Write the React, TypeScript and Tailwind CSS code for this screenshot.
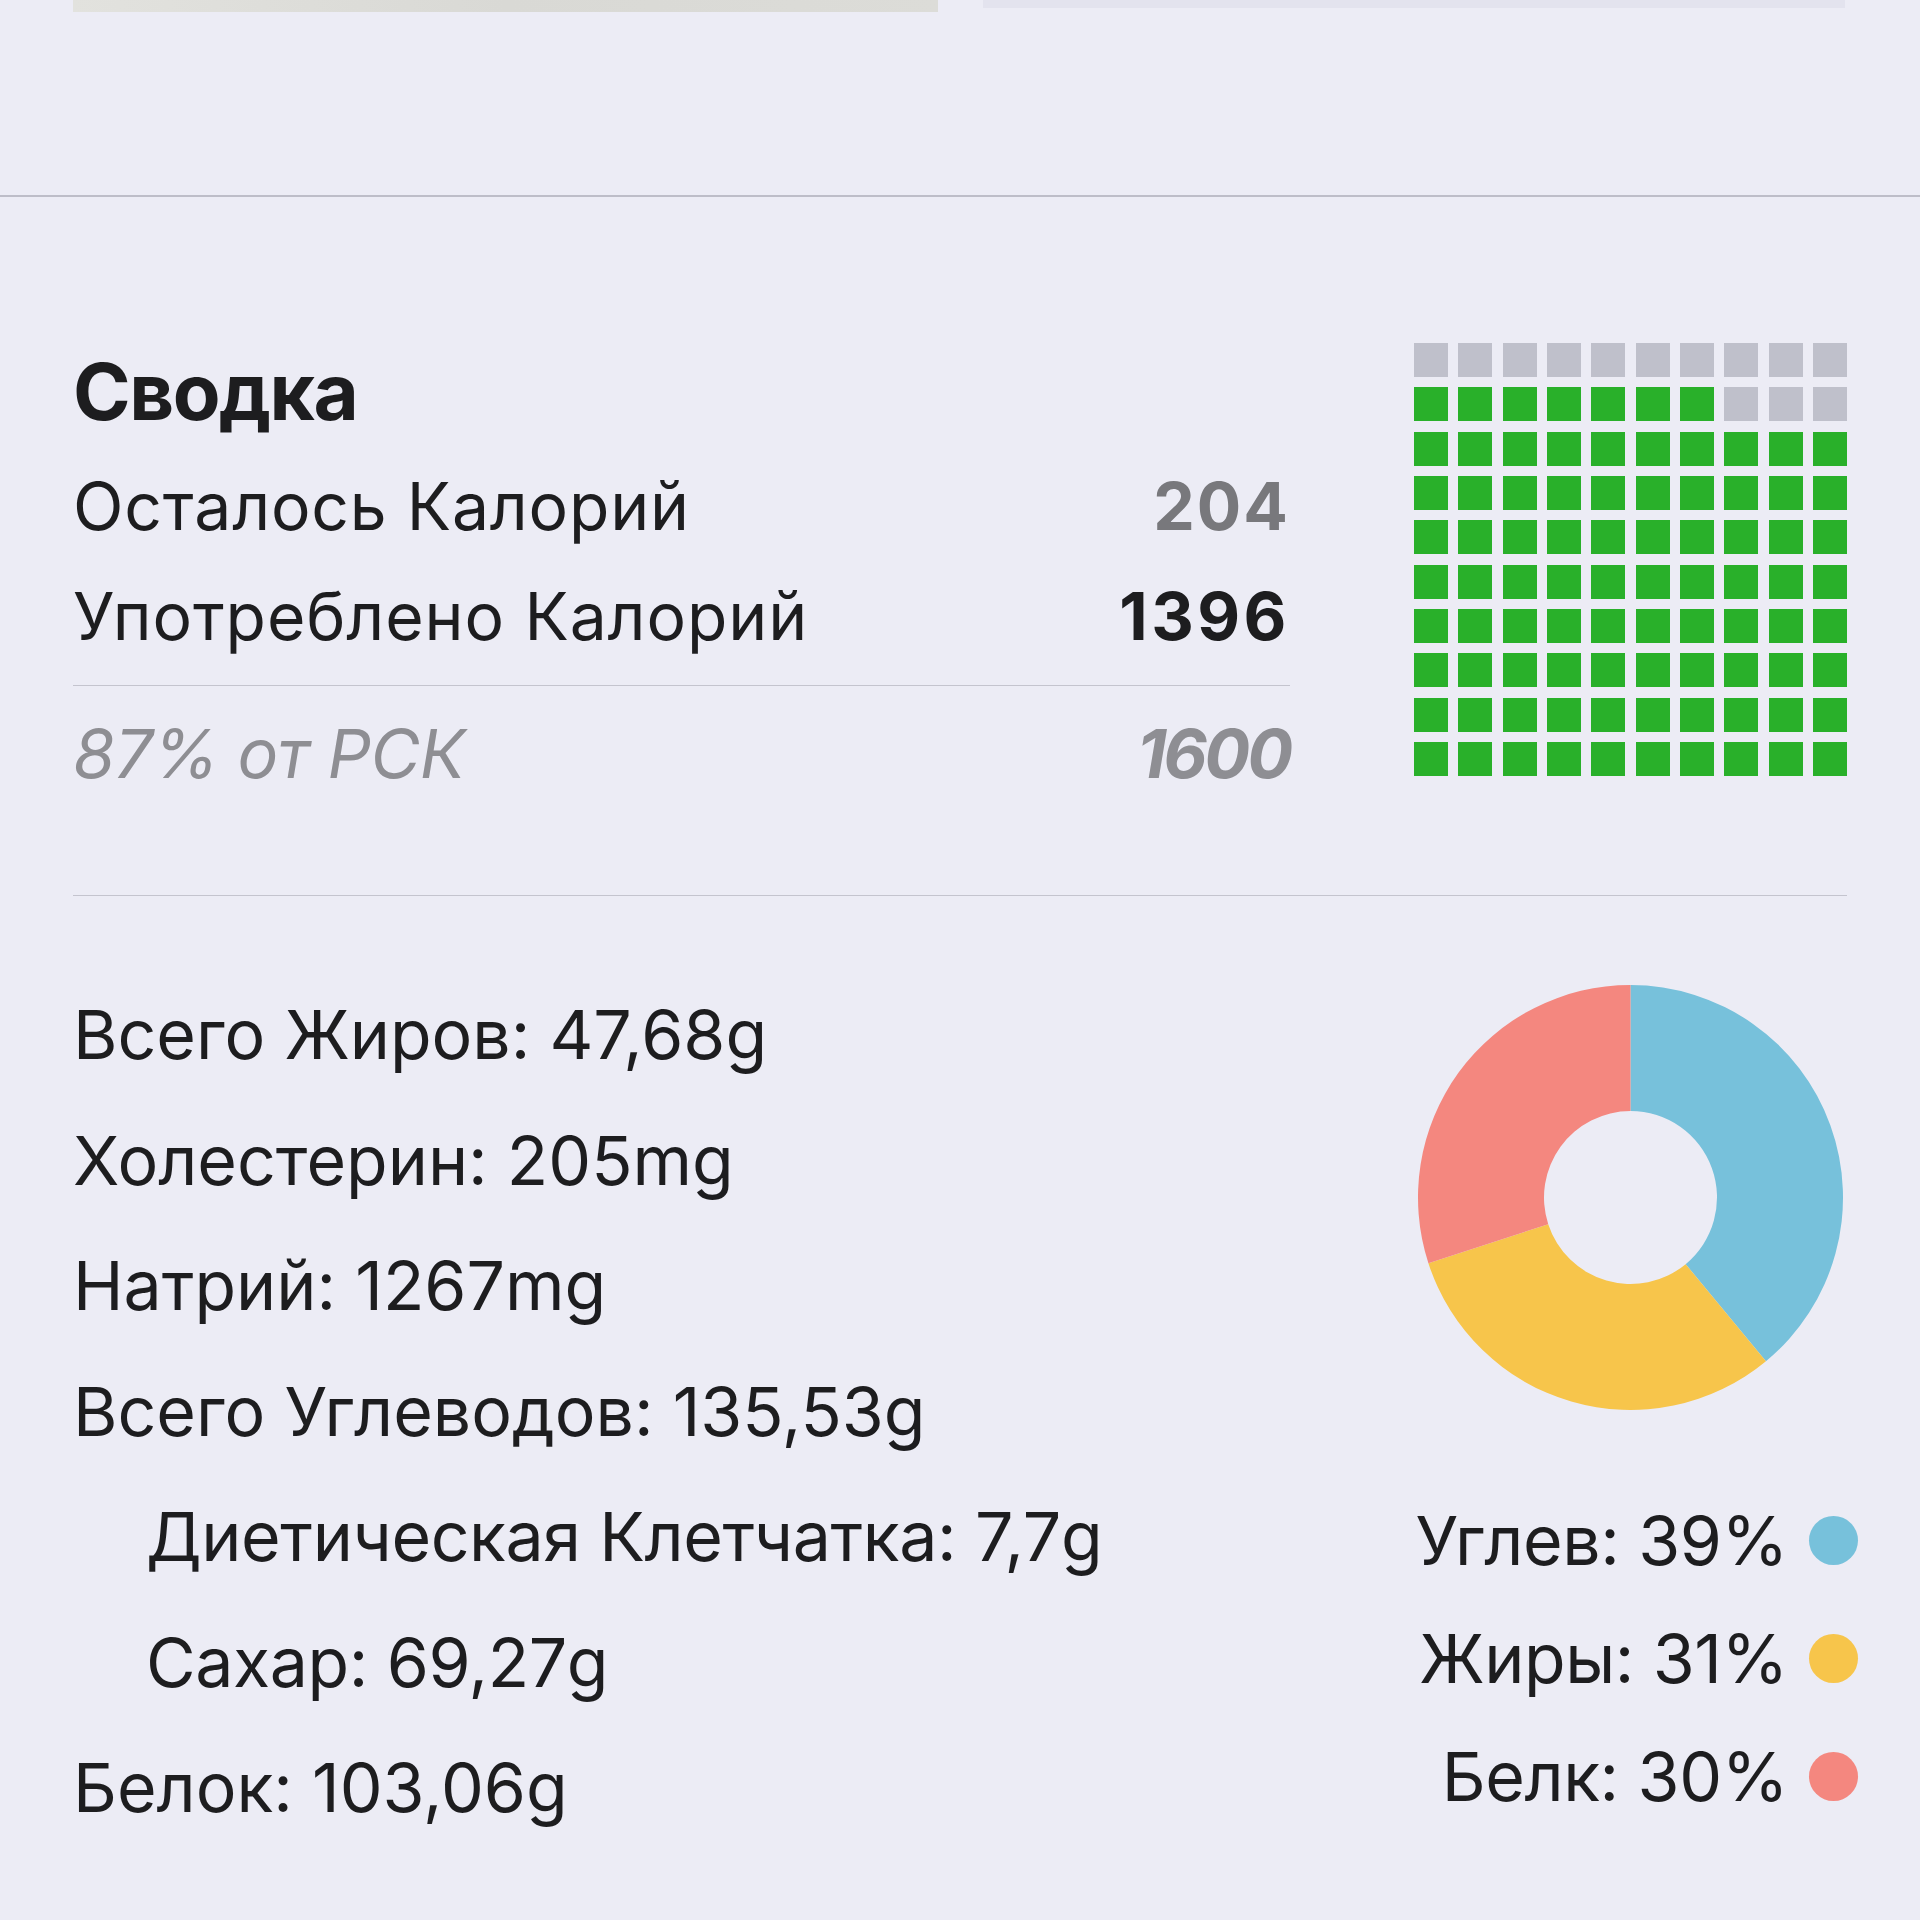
import React from 'react'

// ── Data ──────────────────────────────────────────────────────────────────────

const NUTRIENTS = [
  { label: 'Всего Жиров: 47,68g', indent: false },
  { label: 'Холестерин: 205mg', indent: false },
  { label: 'Натрий: 1267mg', indent: false },
  { label: 'Всего Углеводов: 135,53g', indent: false },
  { label: 'Диетическая Клетчатка: 7,7g', indent: true },
  { label: 'Сахар: 69,27g', indent: true },
  { label: 'Белок: 103,06g', indent: false },
]

const MACROS = [
  { label: 'Углев: 39%', pct: 39, color: '#77c1db', dot: 'bg-[#77c1db]' },
  { label: 'Жиры: 31%', pct: 31, color: '#f7c54b', dot: 'bg-[#f7c54b]' },
  { label: 'Белк: 30%', pct: 30, color: '#f4877f', dot: 'bg-[#f4877f]' },
]

const CONSUMED_PCT = 87

// ── Waffle grid ───────────────────────────────────────────────────────────────

function WaffleGrid({ filled }: { filled: number }) {
  // cells fill from the bottom row upward, left to right
  const cells = Array.from({ length: 100 }, (_, i) => {
    const row = Math.floor(i / 10)
    const col = i % 10
    const fromBottom = (9 - row) * 10 + col
    return fromBottom < filled
  })
  return (
    <div className="grid w-[433px] grid-cols-10 gap-[10.33px]">
      {cells.map((on, i) => (
        <div key={i} className={on ? 'h-[34px] w-[34px] bg-[#29b02a]' : 'h-[34px] w-[34px] bg-[#bfc0cb]'} />
      ))}
    </div>
  )
}

// ── Donut ─────────────────────────────────────────────────────────────────────

function arcPath(cx: number, cy: number, r1: number, r0: number, a0: number, a1: number) {
  const pt = (r: number, a: number) => {
    const rad = (a * Math.PI) / 180
    return [cx + r * Math.sin(rad), cy - r * Math.cos(rad)]
  }
  const large = a1 - a0 > 180 ? 1 : 0
  const [x0, y0] = pt(r1, a0)
  const [x1, y1] = pt(r1, a1)
  const [x2, y2] = pt(r0, a1)
  const [x3, y3] = pt(r0, a0)
  return `M${x0} ${y0} A${r1} ${r1} 0 ${large} 1 ${x1} ${y1} L${x2} ${y2} A${r0} ${r0} 0 ${large} 0 ${x3} ${y3} Z`
}

function Donut() {
  const size = 425
  const c = size / 2
  let start = 0
  return (
    <svg width={size} height={size} viewBox={`0 0 ${size} ${size}`}>
      {MACROS.map((m) => {
        const end = start + (m.pct / 100) * 360
        const d = arcPath(c, c, 212.5, 86.5, start, end)
        start = end
        return <path key={m.label} d={d} fill={m.color} />
      })}
    </svg>
  )
}

// ── Page ──────────────────────────────────────────────────────────────────────

export default function App() {
  return (
    <div className="h-[1920px] w-[1920px] overflow-hidden bg-[#ececf5] font-['Inter','Liberation_Sans',sans-serif] text-[#1d1d1f]">
      {/* Cut-off cards from the section above */}
      <div className="flex items-start px-[73px]">
        <div className="h-[12px] w-[865px] bg-gradient-to-r from-[#e2e2de] via-[#d9d9d5] to-[#dcdcd8]" />
        <div className="ml-[45px] h-[8px] w-[862px] bg-[#e3e3ee]" />
      </div>

      <div className="mt-[183px] h-[2px] bg-[#bdbdc8]" />

      {/* Summary */}
      <div className="px-[73px] pt-[146px]">
        <div className="flex items-start justify-between">
          <div className="w-[1217px]">
            <h2 className="text-[78px] font-bold leading-[97px] tracking-[-1.5px]">Сводка</h2>
            <div className="mt-[11px] flex justify-between text-[66px] leading-[110px]">
              <span className="tracking-[0.8px]">Осталось Калорий</span>
              <span className="font-bold tracking-[2px] text-[#78787c]">204</span>
            </div>
            <div className="flex justify-between text-[66px] leading-[110px]">
              <span className="tracking-[0.9px]">Употреблено Калорий</span>
              <span className="font-bold tracking-[3.5px]">1396</span>
            </div>
            <div className="mt-[14px] h-px bg-[#c4c4ce]" />
            <div className="mt-[17px] flex justify-between text-[68px] italic leading-[100px] text-[#8e8e93]">
              <span className="tracking-[-0.5px]">{CONSUMED_PCT}% от РСК</span>
              <span className="font-bold tracking-[-3px]">1600</span>
            </div>
          </div>
          <WaffleGrid filled={CONSUMED_PCT} />
        </div>
        <div className="mt-[92px] h-px bg-[#c4c4ce]" />
      </div>

      {/* Nutrients */}
      <div className="flex items-start justify-between pl-[73px] pr-[62px]">
        <div className="pt-[76px] text-[68px] leading-[125.5px]">
          {NUTRIENTS.map((n) => (
            <div key={n.label} className={n.indent ? 'pl-[73px] tracking-[-0.4px]' : ''}>
              {n.label}
            </div>
          ))}
        </div>
        <div className="flex flex-col items-end pt-[89px]">
          <div className="mr-[15px]">
            <Donut />
          </div>
          <div className="mt-[71px] flex flex-col items-end text-[68px] leading-[118px]">
            {MACROS.map((m) => (
              <div key={m.label} className="flex items-center gap-[21px]">
                <span className="tracking-[-0.4px]">{m.label}</span>
                <span className={`h-[49px] w-[49px] rounded-full ${m.dot}`} />
              </div>
            ))}
          </div>
        </div>
      </div>
    </div>
  )
}
